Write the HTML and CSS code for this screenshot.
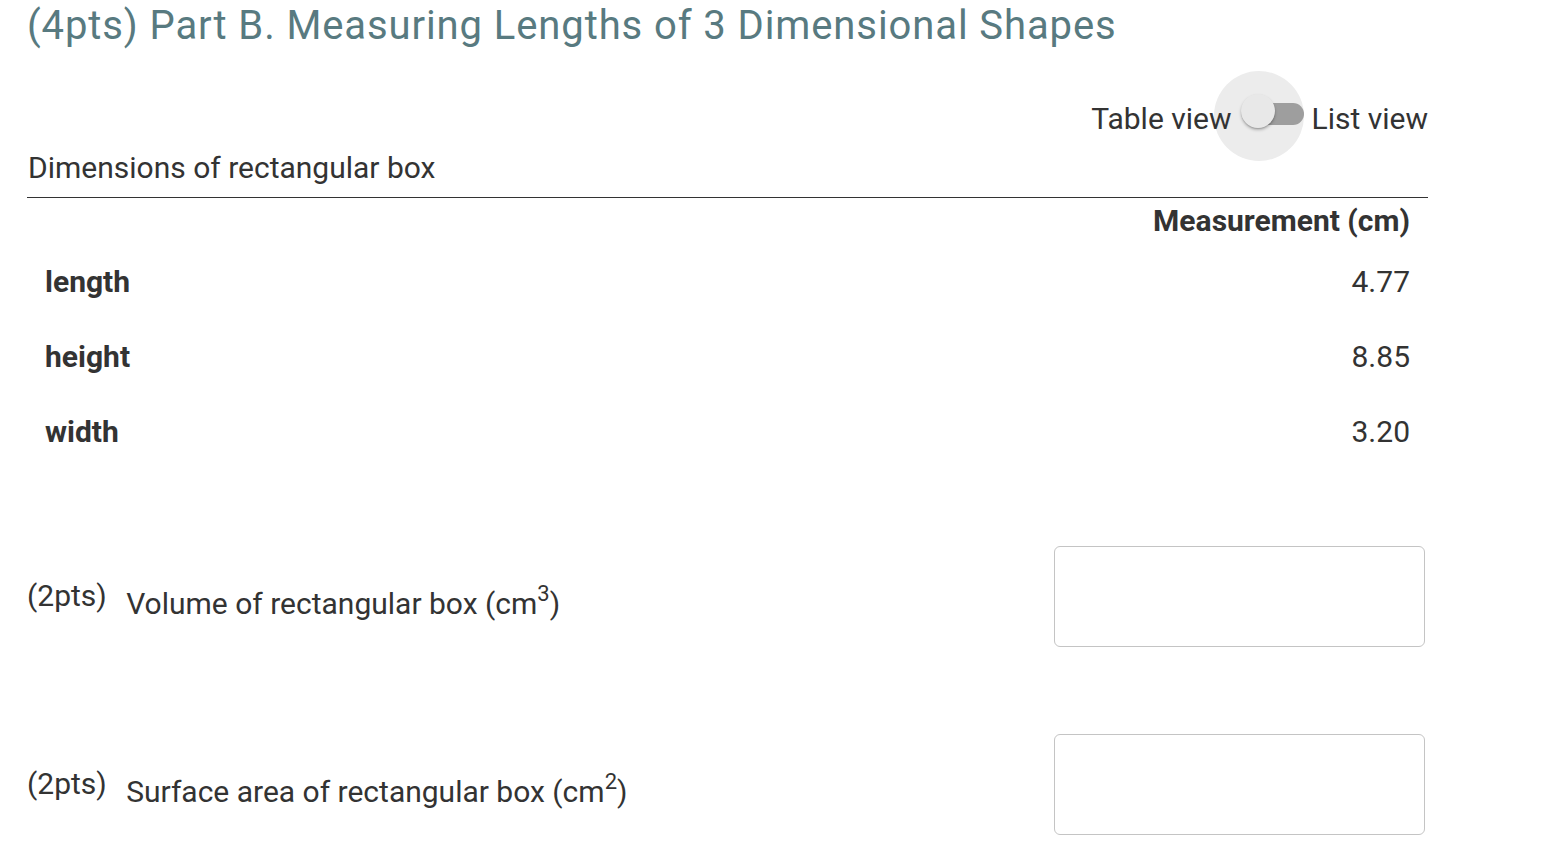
FILE: index.html
```html
<!DOCTYPE html>
<html lang="en">
<head>
<meta charset="utf-8">
<title>Part B</title>
<link rel="stylesheet" href="styles.css">
</head>
<body>
<main class="page">
  <h1 class="title">(4pts) Part B. Measuring Lengths of 3 Dimensional Shapes</h1>

  <div class="view-toggle">
    <span class="toggle-label">Table view</span>
    <span class="switch" role="switch" aria-checked="false">
      <span class="switch-halo"></span>
      <span class="switch-track"></span>
      <span class="switch-thumb"></span>
    </span>
    <span class="toggle-label">List view</span>
  </div>

  <div class="caption">Dimensions of rectangular box</div>

  <div class="data-table">
    <div class="row head">
      <div class="cell label"></div>
      <div class="cell value">Measurement (cm)</div>
    </div>
    <div class="row">
      <div class="cell label">length</div>
      <div class="cell value num">4.77</div>
    </div>
    <div class="row">
      <div class="cell label">height</div>
      <div class="cell value num">8.85</div>
    </div>
    <div class="row">
      <div class="cell label">width</div>
      <div class="cell value num">3.20</div>
    </div>
  </div>

  <div class="question q1">
    <div class="q-text">
      <span class="pts">(2pts)</span>
      <span class="q-label">Volume of rectangular box (cm<sup>3</sup>)</span>
    </div>
    <div class="answer-box"></div>
  </div>

  <div class="question q2">
    <div class="q-text">
      <span class="pts">(2pts)</span>
      <span class="q-label">Surface area of rectangular box (cm<sup>2</sup>)</span>
    </div>
    <div class="answer-box"></div>
  </div>
</main>
</body>
</html>
```

FILE: styles.css
```css
* { box-sizing: border-box; }

body {
  margin: 0;
  background: #ffffff;
  font-family: Roboto, "Liberation Sans", Arial, sans-serif;
  color: #333333;
}

.page {
  width: 1401px;
  margin-left: 27px;
}

.title {
  margin: 0;
  padding-top: 4px;
  font-size: 40px;
  line-height: 44px;
  letter-spacing: 0.9px;
  font-weight: 400;
  color: #587a80;
  white-space: nowrap;
}

.view-toggle {
  margin-top: 53px;
  display: flex;
  justify-content: flex-end;
  align-items: center;
  height: 36px;
  font-size: 30px;
  line-height: 36px;
}

.toggle-label {
  position: relative;
  z-index: 1;
  color: #333333;
}

.switch {
  position: relative;
  width: 80px;
  height: 36px;
  flex: none;
}

.switch-halo {
  position: absolute;
  left: -18px;
  top: -30px;
  width: 90px;
  height: 90px;
  border-radius: 50%;
  background: #ececec;
}

.switch-track {
  position: absolute;
  left: 14px;
  top: 2px;
  width: 58px;
  height: 22px;
  border-radius: 11px;
  background: #9e9e9e;
}

.switch-thumb {
  position: absolute;
  left: 9px;
  top: -7px;
  width: 34px;
  height: 34px;
  border-radius: 50%;
  background: #e8e8e8;
  box-shadow: 0 2px 3px rgba(0,0,0,0.25), 0 1px 1px rgba(0,0,0,0.12);
}

.caption {
  margin-top: 13px;
  padding-left: 1px;
  height: 48px;
  font-size: 30px;
  line-height: 36px;
  border-bottom: 1px solid #333333;
}

.data-table {
  font-size: 30px;
}

.row {
  display: flex;
  justify-content: space-between;
  align-items: center;
  height: 75px;
  line-height: 36px;
}

.row.head {
  height: 46px;
}

.cell.label {
  padding-left: 18px;
  font-weight: 700;
  color: #333333;
}

.cell.value {
  padding-right: 18px;
  text-align: right;
}

.row.head .cell.value {
  font-weight: 700;
}

.cell.num {
  font-weight: 400;
}

.question {
  display: flex;
  justify-content: space-between;
  align-items: center;
  padding-right: 3px;
}

.q1 { margin-top: 77px; }
.q2 { margin-top: 87px; }

.q-text {
  padding-top: 6px;
  font-size: 30px;
  line-height: 36px;
  white-space: nowrap;
}

.pts {
  display: inline-block;
  vertical-align: 8px;
  margin-right: 12px;
}

.q-label sup {
  font-size: 22px;
  line-height: 0;
  vertical-align: 13px;
}

.answer-box {
  width: 371px;
  height: 101px;
  border: 1px solid #c4c4c4;
  border-radius: 6px;
  background: #ffffff;
}
```
